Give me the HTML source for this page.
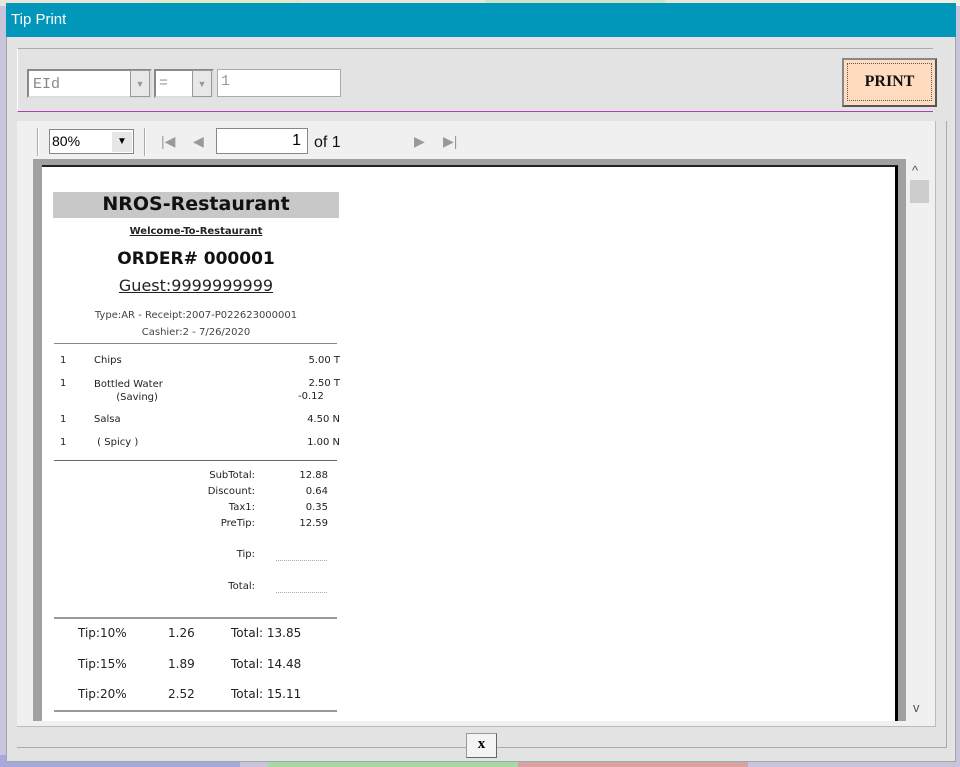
<!DOCTYPE html>
<html><head><meta charset="utf-8"><style>
*{box-sizing:border-box;margin:0;padding:0}
body{width:960px;height:767px;overflow:hidden;background:#c9c3dc;position:relative;font-family:"Liberation Sans",sans-serif}
.a{position:absolute}
.r{font-family:"DejaVu Sans",sans-serif;color:#222;white-space:nowrap}
</style></head><body>
<div class="a" style="left:0;top:0;width:960px;height:6px;background:#e8e6d8"></div>
<div class="a" style="left:150px;top:0;width:150px;height:6px;background:#dfe9c8"></div>
<div class="a" style="left:485px;top:0;width:180px;height:6px;background:#cfe3c6"></div>
<div class="a" style="left:800px;top:0;width:160px;height:6px;background:#f3efe0"></div>
<div class="a" style="left:0;top:755px;width:240px;height:12px;background:#a7a8dc"></div>
<div class="a" style="left:268px;top:755px;width:250px;height:12px;background:#a9d8a6"></div>
<div class="a" style="left:518px;top:755px;width:230px;height:12px;background:#d9a2a0"></div>
<div class="a" style="left:6px;top:3px;width:950px;height:759px;background:#e3e3e3;border:1px solid #9aa"></div>
<div class="a" style="left:6px;top:3px;width:950px;height:34px;background:#0097ba;color:#fff;font-size:15px;padding:8px 0 0 5px">Tip Print</div>
<div class="a" style="left:17px;top:48px;width:916px;height:64px;border-top:1px solid #aaa;border-left:1px solid #fff;border-bottom:1px solid #b040b0"></div>
<div class="a" style="left:27px;top:69px;width:125px;height:29px;background:#fff;border:2px solid #888;border-right-color:#ddd;border-bottom-color:#ddd;font-family:'Liberation Mono',monospace;font-size:15px;color:#888;padding:5px 4px">EId</div>
<div class="a" style="left:130px;top:70px;width:20px;height:27px;background:#e8e8e8;border:1px solid #999;color:#999;font-size:9px;text-align:center;padding-top:8px">▼</div>
<div class="a" style="left:154px;top:69px;width:60px;height:29px;background:#fff;border:2px solid #888;border-right-color:#ddd;border-bottom-color:#ddd;font-family:'Liberation Mono',monospace;font-size:15px;color:#999;padding:4px 3px">=</div>
<div class="a" style="left:192px;top:70px;width:20px;height:27px;background:#e8e8e8;border:1px solid #999;color:#999;font-size:9px;text-align:center;padding-top:8px">▼</div>
<div class="a" style="left:217px;top:69px;width:124px;height:28px;background:#fff;border:1px solid #aaa;font-family:'Liberation Mono',monospace;font-size:15px;color:#999;padding:3px 3px">1</div>
<div class="a" style="left:842px;top:58px;width:95px;height:49px;background:#ffdcbf;border:2px solid #555;border-top-color:#888;border-left-color:#888"></div>
<div class="a" style="left:847px;top:63px;width:85px;height:38px;border:1px dotted #555;font-family:'Liberation Serif',serif;font-weight:bold;font-size:16px;text-align:center;padding-top:9px;color:#111">PRINT</div>
<div class="a" style="left:17px;top:121px;width:919px;height:606px;background:#f0f0f0;border-right:1px solid #bbb;border-bottom:1px solid #bbb"></div>
<div class="a" style="left:37px;top:128px;width:2px;height:28px;border-left:1px solid #aaa;border-right:1px solid #fff"></div>
<div class="a" style="left:49px;top:129px;width:85px;height:25px;background:#fff;border:1px solid #888;font-size:14px;padding:3px 2px">80%</div>
<div class="a" style="left:112px;top:132px;width:20px;height:20px;background:#e6e6e6;font-size:10px;text-align:center;padding-top:4px">▼</div>
<div class="a" style="left:144px;top:128px;width:2px;height:28px;border-left:1px solid #aaa;border-right:1px solid #fff"></div>
<div class="a" style="left:161px;top:133px;color:#999;font-size:14px">|◀</div>
<div class="a" style="left:193px;top:133px;color:#999;font-size:14px">◀</div>
<div class="a" style="left:216px;top:128px;width:92px;height:26px;background:#fff;border:1px solid #888;font-size:16px;text-align:right;padding:3px 6px">1</div>
<div class="a" style="left:314px;top:134px;font-size:16px;color:#111">of 1</div>
<div class="a" style="left:414px;top:133px;color:#999;font-size:14px">▶</div>
<div class="a" style="left:443px;top:133px;color:#999;font-size:14px">▶|</div>
<div class="a" style="left:33px;top:159px;width:873px;height:562px;background:#a0a0a0"></div>
<div class="a" style="left:42px;top:165px;width:856px;height:556px;background:#fff;border-top:2px solid #222;border-right:3px solid #000"></div>
<div class="a" style="left:908px;top:160px;width:22px;height:562px;background:#f0f0f0"></div>
<div class="a" style="left:912px;top:163px;color:#555;font-size:13px">^</div>
<div class="a" style="left:910px;top:180px;width:19px;height:23px;background:#cdcdcd"></div>
<div class="a" style="left:913px;top:700px;color:#555;font-size:13px">v</div>
<div class="a" style="left:53px;top:192px;width:286px;height:26px;background:#c8c8c8"></div>
<div class="a r" style="left:53px;top:193px;width:286px;text-align:center;font-size:19px;font-weight:bold;color:#111">NROS-Restaurant</div>
<div class="a r" style="left:53px;top:226px;width:286px;text-align:center;font-size:10px;font-weight:bold;text-decoration:underline">Welcome-To-Restaurant</div>
<div class="a r" style="left:53px;top:249px;width:286px;text-align:center;font-size:17px;font-weight:bold;color:#111">ORDER# 000001</div>
<div class="a r" style="left:53px;top:276px;width:286px;text-align:center;font-size:16px;text-decoration:underline">Guest:9999999999</div>
<div class="a r" style="left:53px;top:310px;width:286px;text-align:center;font-size:10px;color:#444">Type:AR - Receipt:2007-P022623000001</div>
<div class="a r" style="left:53px;top:327px;width:286px;text-align:center;font-size:10px;color:#444">Cashier:2 - 7/26/2020</div>
<div class="a" style="left:54px;top:343px;width:283px;height:1px;background:#888"></div>
<div class="a r" style="left:60px;top:355px;font-size:10px">1</div>
<div class="a r" style="left:60px;top:378px;font-size:10px">1</div>
<div class="a r" style="left:60px;top:414px;font-size:10px">1</div>
<div class="a r" style="left:60px;top:437px;font-size:10px">1</div>
<div class="a r" style="left:94px;top:355px;font-size:10px">Chips</div>
<div class="a r" style="left:94px;top:378px;font-size:10px;line-height:13px">Bottled Water<br>&nbsp;&nbsp;&nbsp;&nbsp;&nbsp;&nbsp;&nbsp;(Saving)</div>
<div class="a r" style="left:94px;top:414px;font-size:10px">Salsa</div>
<div class="a r" style="left:94px;top:437px;font-size:10px">&nbsp;( Spicy )</div>
<div class="a r" style="left:280px;top:355px;width:60px;text-align:right;font-size:10px">5.00 T</div>
<div class="a r" style="left:280px;top:378px;width:60px;text-align:right;font-size:10px">2.50 T</div>
<div class="a r" style="left:298px;top:391px;font-size:10px">-0.12</div>
<div class="a r" style="left:280px;top:414px;width:60px;text-align:right;font-size:10px">4.50 N</div>
<div class="a r" style="left:280px;top:437px;width:60px;text-align:right;font-size:10px">1.00 N</div>
<div class="a" style="left:54px;top:460px;width:283px;height:1px;background:#666"></div>
<div class="a r" style="left:180px;top:468px;width:75px;text-align:right;font-size:10px;line-height:16px">SubTotal:<br>Discount:<br>Tax1:<br>PreTip:</div>
<div class="a r" style="left:280px;top:468px;width:48px;text-align:right;font-size:10px;line-height:16px">12.88<br>0.64<br>0.35<br>12.59</div>
<div class="a r" style="left:180px;top:549px;width:75px;text-align:right;font-size:10px">Tip:</div>
<div class="a r" style="left:180px;top:581px;width:75px;text-align:right;font-size:10px">Total:</div>
<div class="a" style="left:276px;top:560px;width:51px;border-top:1px dotted #aaa"></div>
<div class="a" style="left:276px;top:592px;width:51px;border-top:1px dotted #aaa"></div>
<div class="a" style="left:54px;top:617px;width:283px;height:2px;background:#999"></div>
<div class="a r" style="left:78px;top:618px;font-size:12px;line-height:30.5px">Tip:10%<br>Tip:15%<br>Tip:20%</div>
<div class="a r" style="left:168px;top:618px;font-size:12px;line-height:30.5px">1.26<br>1.89<br>2.52</div>
<div class="a r" style="left:231px;top:618px;font-size:12px;line-height:30.5px">Total: 13.85<br>Total: 14.48<br>Total: 15.11</div>
<div class="a" style="left:54px;top:710px;width:283px;height:2px;background:#999"></div>
<div class="a" style="left:17px;top:121px;width:930px;height:627px;border-bottom:1px solid #aaa;border-right:1px solid #aaa"></div>
<div class="a" style="left:466px;top:733px;width:31px;height:25px;background:#f4f4f4;border:1px solid #999;border-right-color:#666;border-bottom-color:#666;font-family:'Liberation Serif',serif;font-weight:bold;font-size:15px;text-align:center;padding-top:2px">x</div>
</body></html>
